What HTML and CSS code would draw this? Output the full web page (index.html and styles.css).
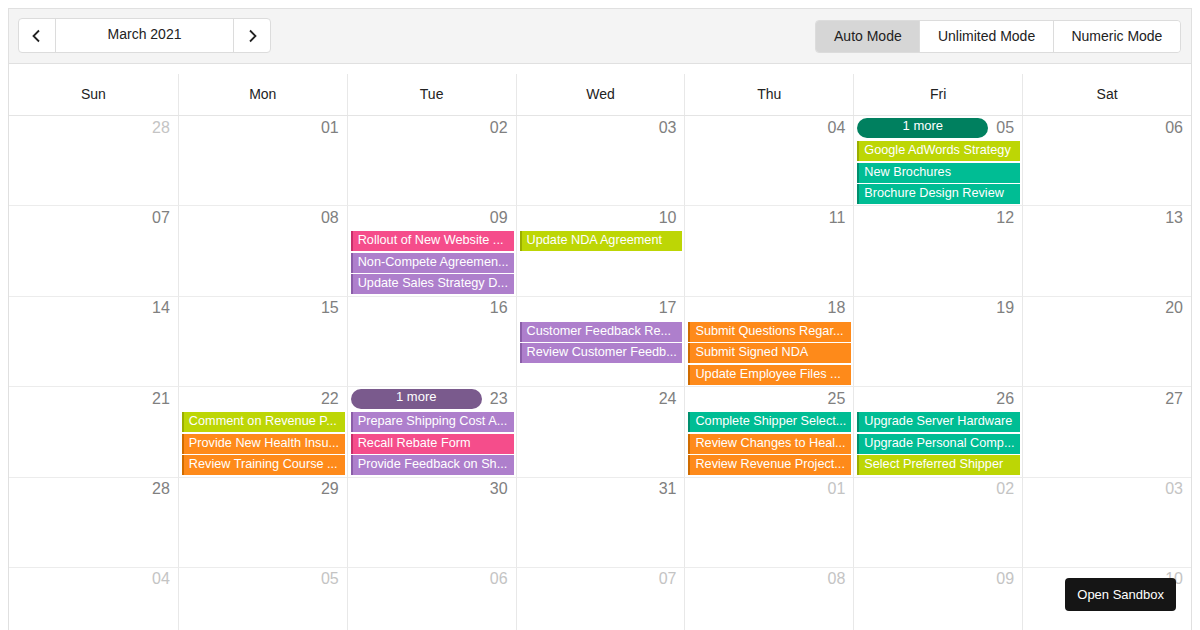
FILE: index.html
```html
<!DOCTYPE html>
<html lang="en">
<head>
  <meta charset="UTF-8" />
  <title>Scheduler - Month View</title>
  <meta name="viewport" content="width=device-width, initial-scale=1.0" />
  <link rel="stylesheet" href="styles.css">
</head>
<body>

  <div class="scheduler">
    <div class="toolbar">
      <div class="date-nav">
        <button class="nav-btn" aria-label="Previous">
          <svg width="12" height="14" viewBox="0 0 12 14"><path d="M8 1.5 2.5 7 8 12.5" fill="none" stroke="#222" stroke-width="1.8"/></svg>
        </button>
        <div class="nav-label">March 2021</div>
        <button class="nav-btn" aria-label="Next">
          <svg width="12" height="14" viewBox="0 0 12 14"><path d="M4 1.5 9.5 7 4 12.5" fill="none" stroke="#222" stroke-width="1.8"/></svg>
        </button>
      </div>
      <div class="modes">
        <button class="mode active">Auto Mode</button>
        <button class="mode">Unlimited Mode</button>
        <button class="mode">Numeric Mode</button>
      </div>
    </div>

    <div class="week-head">
      <div class="day-name">Sun</div>
      <div class="day-name">Mon</div>
      <div class="day-name">Tue</div>
      <div class="day-name">Wed</div>
      <div class="day-name">Thu</div>
      <div class="day-name">Fri</div>
      <div class="day-name">Sat</div>
    </div>

    <div class="month">
      <!-- week 1 -->
      <div class="cell"><div class="cell-top"><span class="date other">28</span></div></div>
      <div class="cell"><div class="cell-top"><span class="date">01</span></div></div>
      <div class="cell"><div class="cell-top"><span class="date">02</span></div></div>
      <div class="cell"><div class="cell-top"><span class="date">03</span></div></div>
      <div class="cell"><div class="cell-top"><span class="date">04</span></div></div>
      <div class="cell">
        <div class="cell-top"><span class="more more-teal">1 more</span><span class="date">05</span></div>
        <div class="event lime">Google AdWords Strategy</div>
        <div class="event teal">New Brochures</div>
        <div class="event teal">Brochure Design Review</div>
      </div>
      <div class="cell"><div class="cell-top"><span class="date">06</span></div></div>

      <!-- week 2 -->
      <div class="cell"><div class="cell-top"><span class="date">07</span></div></div>
      <div class="cell"><div class="cell-top"><span class="date">08</span></div></div>
      <div class="cell">
        <div class="cell-top"><span class="date">09</span></div>
        <div class="event pink">Rollout of New Website ...</div>
        <div class="event purple">Non-Compete Agreemen...</div>
        <div class="event purple">Update Sales Strategy D...</div>
      </div>
      <div class="cell">
        <div class="cell-top"><span class="date">10</span></div>
        <div class="event lime">Update NDA Agreement</div>
      </div>
      <div class="cell"><div class="cell-top"><span class="date">11</span></div></div>
      <div class="cell"><div class="cell-top"><span class="date">12</span></div></div>
      <div class="cell"><div class="cell-top"><span class="date">13</span></div></div>

      <!-- week 3 -->
      <div class="cell"><div class="cell-top"><span class="date">14</span></div></div>
      <div class="cell"><div class="cell-top"><span class="date">15</span></div></div>
      <div class="cell"><div class="cell-top"><span class="date">16</span></div></div>
      <div class="cell">
        <div class="cell-top"><span class="date">17</span></div>
        <div class="event purple">Customer Feedback Re...</div>
        <div class="event purple">Review Customer Feedb...</div>
      </div>
      <div class="cell">
        <div class="cell-top"><span class="date">18</span></div>
        <div class="event orange">Submit Questions Regar...</div>
        <div class="event orange">Submit Signed NDA</div>
        <div class="event orange">Update Employee Files ...</div>
      </div>
      <div class="cell"><div class="cell-top"><span class="date">19</span></div></div>
      <div class="cell"><div class="cell-top"><span class="date">20</span></div></div>

      <!-- week 4 -->
      <div class="cell"><div class="cell-top"><span class="date">21</span></div></div>
      <div class="cell">
        <div class="cell-top"><span class="date">22</span></div>
        <div class="event lime">Comment on Revenue P...</div>
        <div class="event orange">Provide New Health Insu...</div>
        <div class="event orange">Review Training Course ...</div>
      </div>
      <div class="cell">
        <div class="cell-top"><span class="more more-purple">1 more</span><span class="date">23</span></div>
        <div class="event purple">Prepare Shipping Cost A...</div>
        <div class="event pink">Recall Rebate Form</div>
        <div class="event purple">Provide Feedback on Sh...</div>
      </div>
      <div class="cell"><div class="cell-top"><span class="date">24</span></div></div>
      <div class="cell">
        <div class="cell-top"><span class="date">25</span></div>
        <div class="event teal">Complete Shipper Select...</div>
        <div class="event orange">Review Changes to Heal...</div>
        <div class="event orange">Review Revenue Project...</div>
      </div>
      <div class="cell">
        <div class="cell-top"><span class="date">26</span></div>
        <div class="event teal">Upgrade Server Hardware</div>
        <div class="event teal">Upgrade Personal Comp...</div>
        <div class="event lime">Select Preferred Shipper</div>
      </div>
      <div class="cell"><div class="cell-top"><span class="date">27</span></div></div>

      <!-- week 5 -->
      <div class="cell"><div class="cell-top"><span class="date">28</span></div></div>
      <div class="cell"><div class="cell-top"><span class="date">29</span></div></div>
      <div class="cell"><div class="cell-top"><span class="date">30</span></div></div>
      <div class="cell"><div class="cell-top"><span class="date">31</span></div></div>
      <div class="cell"><div class="cell-top"><span class="date other">01</span></div></div>
      <div class="cell"><div class="cell-top"><span class="date other">02</span></div></div>
      <div class="cell"><div class="cell-top"><span class="date other">03</span></div></div>

      <!-- week 6 -->
      <div class="cell"><div class="cell-top"><span class="date other">04</span></div></div>
      <div class="cell"><div class="cell-top"><span class="date other">05</span></div></div>
      <div class="cell"><div class="cell-top"><span class="date other">06</span></div></div>
      <div class="cell"><div class="cell-top"><span class="date other">07</span></div></div>
      <div class="cell"><div class="cell-top"><span class="date other">08</span></div></div>
      <div class="cell"><div class="cell-top"><span class="date other">09</span></div></div>
      <div class="cell"><div class="cell-top"><span class="date other">10</span></div></div>
    </div>
  </div>

  <button class="sandbox-btn">Open Sandbox</button>

</body>
</html>
```

FILE: styles.css
```css
html, body {
  margin: 0;
  height: 100%;
  overflow: hidden;
}
body {
  background: #fff;
  color: #333;
  font-family: 'Liberation Sans', Arial, sans-serif;
  padding: 8px 8px 0 8px;
  box-sizing: border-box;
}
button {
  font-family: inherit;
  cursor: pointer;
}

.scheduler {
  border: 1px solid #e0e0e0;
  border-bottom: none;
}

/* toolbar */
.toolbar {
  height: 54px;
  background: #f4f4f4;
  border-bottom: 1px solid #e0e0e0;
  padding: 0 9px;
  display: flex;
  align-items: center;
  justify-content: space-between;
}
.date-nav {
  display: flex;
  height: 35px;
  background: #fff;
  border: 1px solid #dcdcdc;
  border-radius: 4px;
  box-sizing: border-box;
  margin-bottom: 1px;
}
.nav-btn {
  width: 36px;
  border: none;
  background: transparent;
  display: flex;
  align-items: center;
  justify-content: center;
  padding: 0;
}
.nav-label {
  width: 177px;
  border-left: 1px solid #dcdcdc;
  border-right: 1px solid #dcdcdc;
  display: flex;
  align-items: center;
  justify-content: center;
  font-size: 14px;
  color: #222;
  padding-bottom: 3px;
}
.modes {
  display: flex;
  height: 33px;
  border: 1px solid #dcdcdc;
  border-radius: 4px;
  overflow: hidden;
  box-sizing: border-box;
  margin-right: 1px;
}
.mode {
  border: none;
  border-left: 1px solid #dcdcdc;
  background: #fff;
  font-size: 14px;
  color: #222;
  padding: 0 17.6px 1px;
}
.mode:first-child { border-left: none; }
.mode.active { background: #d6d6d6; }

/* week header */
.week-head {
  display: grid;
  grid-template-columns: repeat(7, 1fr);
  padding-top: 10px;
  border-bottom: 1px solid #e4e4e4;
}
.day-name {
  height: 41px;
  box-sizing: border-box;
  padding-bottom: 2px;
  display: flex;
  align-items: center;
  justify-content: center;
  font-size: 14px;
  color: #222;
  border-left: 1px solid #e8e8e8;
}
.day-name:first-child { border-left: none; }

/* month grid */
.month {
  display: grid;
  grid-template-columns: repeat(7, 1fr);
  grid-template-rows: repeat(6, 90.4px);
}
.cell {
  border-left: 1px solid #e8e8e8;
  border-bottom: 1px solid #ececec;
  padding: 1px 2px 0 2px;
  min-width: 0;
  overflow: hidden;
}
.cell:nth-child(7n+1) { border-left: none; }
.cell-top {
  height: 21px;
  display: flex;
  align-items: center;
  justify-content: flex-end;
  margin-bottom: 3px;
}
.date {
  font-size: 16px;
  color: #808080;
  padding-right: 6px;
}
.date.other { color: #c4c4c4; }

.more {
  flex: 1;
  height: 20px;
  border-radius: 10px;
  color: #fff;
  font-size: 13px;
  text-align: center;
  line-height: 15px;
  margin-right: 8px;
  margin-left: 1px;
}
.more-teal { background: #00805f; }
.more-purple { background: #7a5a8d; }

.event {
  height: 20px;
  line-height: 18px;
  margin: 0 0 1.5px 1px;
  padding-left: 5px;
  border-left: 2px solid;
  color: #fff;
  font-size: 12.7px;
  white-space: nowrap;
  overflow: hidden;
}
.lime { background: #bdd605; border-color: #9aae00; }
.teal { background: #00bd94; border-color: #008f6e; }
.pink { background: #f54d8b; border-color: #c8306b; }
.purple { background: #ae7fcc; border-color: #8a5ea8; }
.orange { background: #fe8a1a; border-color: #d06c00; }

.sandbox-btn {
  position: fixed;
  right: 24px;
  bottom: 19px;
  height: 33px;
  padding: 0 12px;
  background: #151515;
  color: #fff;
  border: none;
  border-radius: 4px;
  font-size: 13px;
}
```
